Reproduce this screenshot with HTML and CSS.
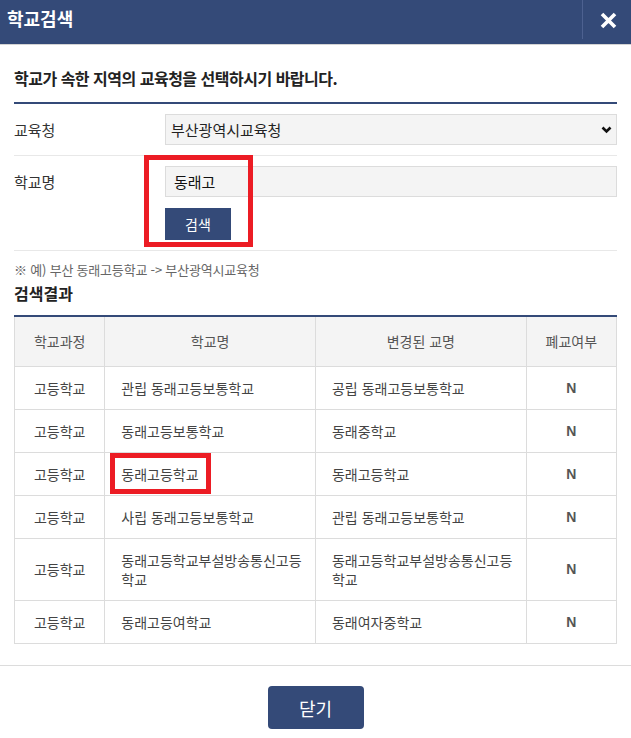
FILE: index.html
```html
<!DOCTYPE html>
<html lang="ko">
<head>
<meta charset="utf-8">
<title>학교검색</title>
<link rel="stylesheet" href="styles.css">
</head>
<body>
<div class="popup">
  <div class="popup-header">
    <h1 class="popup-title">학교검색</h1>
    <button class="popup-x" type="button" aria-label="닫기">
      <svg width="17" height="17" viewBox="0 0 17 17"><path d="M2 2 L15 15 M15 2 L2 15" stroke="#fff" stroke-width="3.6" fill="none"/></svg>
    </button>
  </div>
  <div class="popup-body">
    <p class="lead">학교가 속한 지역의 교육청을 선택하시기 바랍니다.</p>
    <div class="form-row">
      <div class="form-label">교육청</div>
      <div class="form-control">
        <div class="select-wrap">
          <select class="select"><option>부산광역시교육청</option></select>
          <svg class="select-arrow" width="11" height="8" viewBox="0 0 11 8"><path d="M1.5 1.5 L5.5 5.5 L9.5 1.5" stroke="#111" stroke-width="2.6" fill="none"/></svg>
        </div>
      </div>
    </div>
    <div class="form-row">
      <div class="form-label">학교명</div>
      <div class="form-control">
        <input class="text-input" type="text" value="동래고">
        <button class="btn-search" type="button">검색</button>
        <div class="mark-box mark-form"></div>
      </div>
    </div>
    <p class="note">※ 예) 부산 동래고등학교 -&gt; 부산광역시교육청</p>
    <h2 class="result-title">검색결과</h2>
    <table class="result-table">
      <colgroup><col class="c1"><col class="c2"><col class="c3"><col class="c4"></colgroup>
      <thead>
        <tr><th>학교과정</th><th>학교명</th><th>변경된 교명</th><th>폐교여부</th></tr>
      </thead>
      <tbody>
        <tr><td class="center">고등학교</td><td>관립 동래고등보통학교</td><td>공립 동래고등보통학교</td><td class="center yn">N</td></tr>
        <tr><td class="center">고등학교</td><td>동래고등보통학교</td><td>동래중학교</td><td class="center yn">N</td></tr>
        <tr><td class="center">고등학교</td><td><span class="marked">동래고등학교<span class="mark-box mark-cell"></span></span></td><td>동래고등학교</td><td class="center yn">N</td></tr>
        <tr><td class="center">고등학교</td><td>사립 동래고등보통학교</td><td>관립 동래고등보통학교</td><td class="center yn">N</td></tr>
        <tr><td class="center">고등학교</td><td>동래고등학교부설방송통신고등학교</td><td>동래고등학교부설방송통신고등학교</td><td class="center yn">N</td></tr>
        <tr><td class="center">고등학교</td><td>동래고등여학교</td><td>동래여자중학교</td><td class="center yn">N</td></tr>
      </tbody>
    </table>
  </div>
  <div class="popup-footer">
    <button class="btn-close" type="button">닫기</button>
  </div>
</div>
</body>
</html>
```

FILE: styles.css
```css
* { box-sizing: border-box; }
html, body { margin: 0; padding: 0; background: #fff; }
body {
  font-family: "Noto Sans CJK KR", "Noto Sans", "Liberation Sans", sans-serif;
  color: #333;
}
.popup { width: 631px; }

.popup-header {
  height: 45px;
  background: #344a78;
  border-bottom: 1px solid #d3d3d3;
  display: flex;
  align-items: flex-start;
  justify-content: space-between;
}
.popup-title {
  margin: 0;
  padding-left: 7px;
  font-size: 18px;
  line-height: 37px;
  font-weight: 700;
  color: #fff;
}
.popup-x {
  width: 49px;
  height: 39px;
  margin: 0;
  padding: 12px 0 0 17px;
  border: 0;
  border-left: 1px solid #4d6190;
  background: transparent;
  display: flex;
  align-items: flex-start;
}

.popup-body { padding: 0 14px; }

.lead {
  margin: 22px 0 0;
  padding-bottom: 13px;
  border-bottom: 2px solid #344a78;
  font-size: 16px;
  line-height: 22px;
  font-weight: 700;
  color: #222;
  letter-spacing: -0.5px;
}

.form-row {
  display: flex;
  padding: 10px 0;
  border-bottom: 1px solid #e8e8e8;
}
.form-label {
  width: 151px;
  flex: none;
  font-size: 15px;
  line-height: 31px;
  color: #333;
}
.form-control {
  flex: 1;
  position: relative;
  display: flex;
  flex-direction: column;
  align-items: flex-start;
}
.select-wrap { position: relative; width: 100%; }
.select {
  -webkit-appearance: none;
  appearance: none;
  display: block;
  width: 100%;
  height: 31px;
  margin: 0;
  padding: 0 5px;
  border: 1px solid #dcdcdc;
  border-radius: 0;
  background: #f4f4f4;
  font-family: inherit;
  font-size: 15px;
  color: #222;
  outline: none;
}
.select-arrow {
  position: absolute;
  right: 5px;
  top: 12px;
  pointer-events: none;
}
.text-input {
  display: block;
  width: 100%;
  height: 31px;
  margin: 0;
  padding: 0 8px;
  border: 1px solid #dcdcdc;
  border-radius: 0;
  background: #f4f4f4;
  font-family: inherit;
  font-size: 15px;
  color: #111;
  outline: none;
}
.btn-search {
  margin-top: 11px;
  width: 66px;
  height: 32px;
  border: 0;
  background: #344a78;
  color: #fff;
  font-family: inherit;
  font-size: 14px;
  padding: 0;
}

.mark-box {
  position: absolute;
  border: 5px solid #ec1c24;
  pointer-events: none;
}
.mark-form {
  left: -21px;
  top: -11px;
  width: 109px;
  height: 92px;
}

.note {
  margin: 10px 0 0;
  font-size: 13px;
  line-height: 18px;
  color: #666;
  letter-spacing: -0.2px;
}
.result-title {
  margin: 3px 0 0;
  font-size: 16px;
  line-height: 22px;
  font-weight: 700;
  color: #222;
}

.result-table {
  width: 100%;
  margin-top: 11px;
  border-collapse: collapse;
  table-layout: fixed;
  border-top: 2px solid #344a78;
  font-size: 14px;
  color: #444;
}
.result-table col.c1, .result-table col.c4 { width: 15%; }
.result-table col.c2, .result-table col.c3 { width: 35%; }
.result-table th {
  background: #f4f4f4;
  border: 1px solid #dcdcdc;
  border-top: 2px solid #344a78;
  padding: 15px 4px;
  line-height: 19px;
  font-weight: 400;
  color: #555;
}
.result-table td {
  border: 1px solid #dcdcdc;
  padding: 11.5px 8px 11.5px 16px;
  line-height: 19px;
  vertical-align: middle;
}
.result-table td.center { text-align: center; padding-left: 4px; padding-right: 4px; }
.result-table td.yn { font-weight: 700; font-family: "Liberation Sans", sans-serif; font-size: 14px; color: #555; }
.marked { position: relative; }
.mark-cell {
  left: -11px;
  top: -11px;
  width: 101px;
  height: 41px;
}

.popup-footer {
  margin-top: 21px;
  border-top: 1px solid #dcdcdc;
  padding-top: 20px;
  display: flex;
  justify-content: center;
}
.btn-close {
  width: 96px;
  height: 43px;
  border: 0;
  border-radius: 4px;
  background: #344a78;
  color: #fff;
  font-family: inherit;
  font-size: 18px;
  padding: 0;
}
```
